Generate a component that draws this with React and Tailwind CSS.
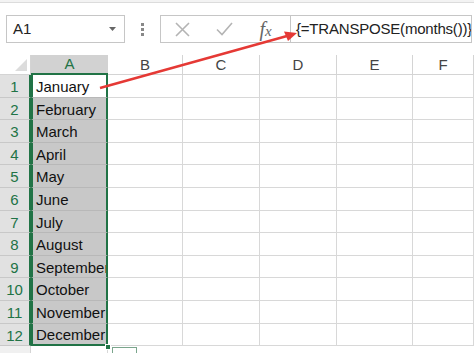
import React from "react";

const months = ["January","February","March","April","May","June","July","August","September","October","November","December"];
const cols = [
  { l: "B", w: "w-[75px] shrink-0" },
  { l: "C", w: "w-[77px] shrink-0" },
  { l: "D", w: "w-[77px] shrink-0" },
  { l: "E", w: "w-[76px] shrink-0" },
  { l: "F", w: "flex-1" },
];

export default function App() {
  return (
    <div className="relative w-[474px] h-[353px] overflow-hidden bg-white" style={{ fontFamily: '"Liberation Sans", Arial, sans-serif' }}>
      {/* top strip */}
      <div className="h-[3px] bg-[#f3f3f3] border-b border-[#dcdcdc]"></div>
      <div className="flex items-stretch h-[28px] mt-[12px] pl-[6px]">
        <div className="w-[119px] shrink-0 border border-[#c6c6c6] flex items-center justify-between pl-[6px] pr-[8px]">
          <span className="text-[15px] text-[#222]">A1</span>
          <svg width="7" height="4" viewBox="0 0 7 4"><path d="M0 0h7L3.5 4z" fill="#666" /></svg>
        </div>
        <div className="w-[35px] shrink-0 flex flex-col items-center justify-center gap-[2px]">
          <div className="w-[3px] h-[3px] bg-[#888]"></div>
          <div className="w-[3px] h-[3px] bg-[#888]"></div>
          <div className="w-[3px] h-[3px] bg-[#888]"></div>
        </div>
        <div className="w-[131px] shrink-0 border border-[#c6c6c6] flex items-center">
          <div className="w-[42px] flex justify-center">
            <svg width="15" height="15" viewBox="0 0 15 15"><path d="M1 1L14 14M14 1L1 14" stroke="#b4b4b4" strokeWidth="1.6" /></svg>
          </div>
          <div className="w-[42px] flex justify-center">
            <svg width="17" height="14" viewBox="0 0 17 14"><path d="M1 7.5L6 12.5L16 1" stroke="#b4b4b4" strokeWidth="1.6" fill="none" /></svg>
          </div>
          <div className="flex-1 flex justify-center pr-[4px]">
            <span className="text-[20px] italic text-[#666]" style={{ fontFamily: '"Liberation Serif", serif' }}>f<span className="text-[15px]">x</span></span>
          </div>
        </div>
        <div className="flex-1 min-w-0 overflow-hidden border border-[#c6c6c6] border-l-0 flex items-center pl-[5px] mr-[2px]">
          <span className="text-[15px] tracking-[-0.2px] text-[#222] whitespace-nowrap">{"{=TRANSPOSE(months())}"}</span>
        </div>
      </div>
      {/* grid */}
      <div className="mt-[12px]">
        <div className="flex h-[20px]">
          <div className="w-[31px] shrink-0 bg-white border-r border-[#d4d4d4] border-b relative">
            <svg className="absolute right-[3px] bottom-[3px]" width="12" height="12" viewBox="0 0 12 12"><path d="M12 0V12H0z" fill="#dcdcdc" /></svg>
          </div>
          <div className="w-[77px] shrink-0 bg-[#d2d2d2] border-b-2 border-[#217346] flex items-center justify-center pt-[1px] text-[15px] text-[#217346]">A</div>
          {cols.map((c) => (
            <div key={c.l} className={`${c.w} border-r border-b border-[#d4d4d4] flex items-center justify-center pt-[1px] text-[15px] text-[#444]`}>{c.l}</div>
          ))}
        </div>
        {months.map((m, i) => (
          <div key={m} className="flex h-[22.6px]">
            <div className="w-[31px] shrink-0 bg-[#e1e1e1] border-r-2 border-[#217346] border-b border-b-[#c8c8c8] flex items-center justify-center pt-[3px] text-[15px] text-[#217346]">{i + 1}</div>
            <div className={`w-[77px] shrink-0 overflow-hidden whitespace-nowrap flex items-center pl-[3px] pt-[3px] text-[15px] text-[#111] border-r-2 border-l-2 border-[#217346] ${i === 0 ? "bg-white" : "bg-[#c8c8c8]"} ${i === 11 ? "border-b-2 border-b-[#217346]" : "border-b border-b-[#b8b8b8]"}`}>{m}</div>
            {cols.map((c) => (
              <div key={c.l} className={`${c.w} border-r border-b border-[#d8d8d8]`}></div>
            ))}
          </div>
        ))}
        <div className="flex h-[10px]">
          <div className="w-[31px] shrink-0 bg-[#f0f0f0] border-r border-[#d4d4d4]"></div>
          <div className="w-[77px] shrink-0 border-r border-[#d8d8d8]"></div>
          <div className="w-[75px] shrink-0 pl-[4px] pt-[1px]">
            <div className="w-[25px] h-[8px] border border-[#7aa58c]"></div>
          </div>
        </div>
      </div>
      {/* fill handle */}
      <div className="absolute left-[105px] top-[344px] w-[6px] h-[6px] bg-[#217346] border border-white"></div>
      {/* red arrow */}
      <svg className="absolute left-0 top-0 pointer-events-none" width="474" height="353" viewBox="0 0 474 353">
        <line x1="100" y1="88" x2="287" y2="36" stroke="#e53935" strokeWidth="2.5" />
        <path d="M297 33L284 31.5L288 41z" fill="#e53935" />
      </svg>
    </div>
  );
}
